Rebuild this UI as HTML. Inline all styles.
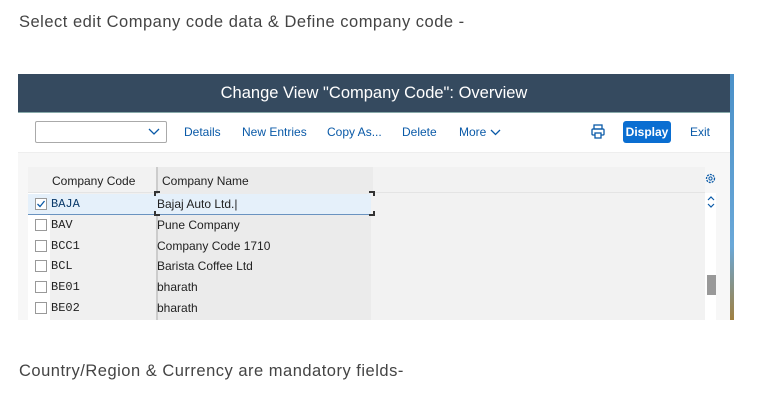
<!DOCTYPE html>
<html><head><meta charset="utf-8"><style>
body{margin:0;width:768px;height:412px;background:#fff;position:relative;overflow:hidden;font-family:"Liberation Sans",sans-serif}
.p{position:absolute;left:19px;font-size:16.5px;color:#444;letter-spacing:0.5px;white-space:nowrap}
.a{position:absolute}
.hdr{left:18px;top:74px;width:712px;height:38px;background:#354a5f;color:#fff;font-size:16.5px;text-align:center;line-height:38px;border-bottom:1px solid #8aa}
.tb{left:18px;top:113px;width:712px;height:39px;background:#fff;border-bottom:1px solid #eee}
.lk{position:absolute;top:12px;font-size:12px;color:#0a5aa8;white-space:nowrap}
.body{left:18px;top:153px;width:712px;height:167px;background:#f7f7f7}
.t{font-size:12px;color:#222;position:absolute;white-space:nowrap}
.cb{position:absolute;left:35px;width:10px;height:10px;border:1px solid #999;background:#fff}
.mono{font-family:"Liberation Mono",monospace;font-size:12px}
</style></head><body>
<div class="p" style="top:13px">Select edit Company code data &amp; Define company code -</div>
<div class="a hdr">Change View "Company Code": Overview</div>
<div class="a tb">
 <div class="a" style="left:17px;top:8px;width:130px;height:20px;border:1px solid #aaa;border-radius:2px;background:#fff"><svg style="position:absolute;right:6px;top:6px" width="12" height="8"><path d="M1 1l5 5 5-5" stroke="#0a5aa8" fill="none" stroke-width="1.3"/></svg></div>
 <span class="lk" style="left:166px">Details</span>
 <span class="lk" style="left:224px">New Entries</span>
 <span class="lk" style="left:309px">Copy As...</span>
 <span class="lk" style="left:384px">Delete</span>
 <span class="lk" style="left:441px">More <svg width="11" height="7"><path d="M1 1l4.5 4.5L10 1" stroke="#0a5aa8" fill="none" stroke-width="1.3"/></svg></span>
 <svg class="a" style="left:573px;top:11px" width="14" height="15"><rect x="3" y="1" width="8" height="4" fill="none" stroke="#0a5aa8" stroke-width="1.3"/><rect x="1" y="5" width="12" height="6" rx="1" fill="none" stroke="#0a5aa8" stroke-width="1.3"/><rect x="4" y="9" width="6" height="5" fill="#fff" stroke="#0a5aa8" stroke-width="1.3"/></svg>
 <div class="a" style="left:605px;top:8px;width:48px;height:22px;background:#0a6ed1;border-radius:3px;color:#fff;font-size:12px;font-weight:bold;text-align:center;line-height:22px">Display</div>
 <span class="lk" style="left:672px">Exit</span>
</div>
<div class="a body"></div>
<div class="a" style="left:28px;top:167px;width:677px;height:25px;background:#f2f2f2;border-bottom:1px solid #e4e4e4"></div>
<div class="a" style="left:28px;top:193px;width:22px;height:127px;background:#fff"></div>
<div class="a" style="left:50px;top:193px;width:106px;height:127px;background:#f0f0f0"></div>
<div class="a" style="left:156px;top:167px;width:215px;height:153px;background:#ebebeb;border-left:2px solid #ccc"></div>
<div class="a" style="left:371px;top:193px;width:334px;height:127px;background:#f2f2f2"></div>
<div class="a" style="left:705px;top:193px;width:11px;height:127px;background:#fff"></div>
<div class="a" style="left:707px;top:275px;width:9px;height:20px;background:#999"></div>
<div class="a" style="left:28px;top:194px;width:343px;height:20px;background:#e5f0fa;border-bottom:1px solid #6a93c0"></div>
<span class="t" style="left:52px;top:174px">Company Code</span>
<span class="t" style="left:162px;top:174px">Company Name</span>
<svg class="a" style="left:705px;top:173px" width="11" height="11"><circle cx="5.5" cy="5.5" r="4" fill="none" stroke="#0a5aa8" stroke-width="1.3" stroke-dasharray="2 1"/><circle cx="5.5" cy="5.5" r="1.6" fill="none" stroke="#0a5aa8"/></svg>
<svg class="a" style="left:707px;top:196px" width="8" height="12"><path d="M1 4l3-3 3 3M1 8l3 3 3-3" stroke="#0a5aa8" fill="none" stroke-width="1.2"/></svg>
<div class="cb" style="top:198px"></div><svg class="a" style="left:36px;top:199px" width="10" height="10"><path d="M1.5 5l2.5 2.5L8.5 2" stroke="#0a5aa8" fill="none" stroke-width="1.3"/></svg>
<div class="cb" style="top:219px"></div><div class="cb" style="top:240px"></div><div class="cb" style="top:260px"></div><div class="cb" style="top:281px"></div><div class="cb" style="top:302px"></div>
<span class="t mono" style="left:51px;top:197px;color:#0a3a6a">BAJA</span>
<span class="t mono" style="left:51px;top:218px">BAV</span>
<span class="t mono" style="left:51px;top:239px">BCC1</span>
<span class="t mono" style="left:51px;top:259px">BCL</span>
<span class="t mono" style="left:51px;top:280px">BE01</span>
<span class="t mono" style="left:51px;top:301px">BE02</span>
<span class="t" style="left:157px;top:197px">Bajaj Auto Ltd.|</span>
<span class="t" style="left:157px;top:218px">Pune Company</span>
<span class="t" style="left:157px;top:239px">Company Code 1710</span>
<span class="t" style="left:157px;top:259px">Barista Coffee Ltd</span>
<span class="t" style="left:157px;top:280px">bharath</span>
<span class="t" style="left:157px;top:301px">bharath</span>
<div class="a" style="left:154px;top:191px;width:4px;height:3px;border-left:2px solid #333;border-top:2px solid #333"></div>
<div class="a" style="left:369px;top:191px;width:4px;height:3px;border-right:2px solid #333;border-top:2px solid #333"></div>
<div class="a" style="left:154px;top:211px;width:4px;height:3px;border-left:2px solid #333;border-bottom:2px solid #333"></div>
<div class="a" style="left:369px;top:211px;width:4px;height:3px;border-right:2px solid #333;border-bottom:2px solid #333"></div>
<div class="a" style="left:730px;top:74px;width:4px;height:246px;background:linear-gradient(#4a90c8,#6aa8d8 70%,#a08040)"></div>
<div class="p" style="top:362px">Country/Region &amp; Currency are mandatory fields-</div>
</body></html>
